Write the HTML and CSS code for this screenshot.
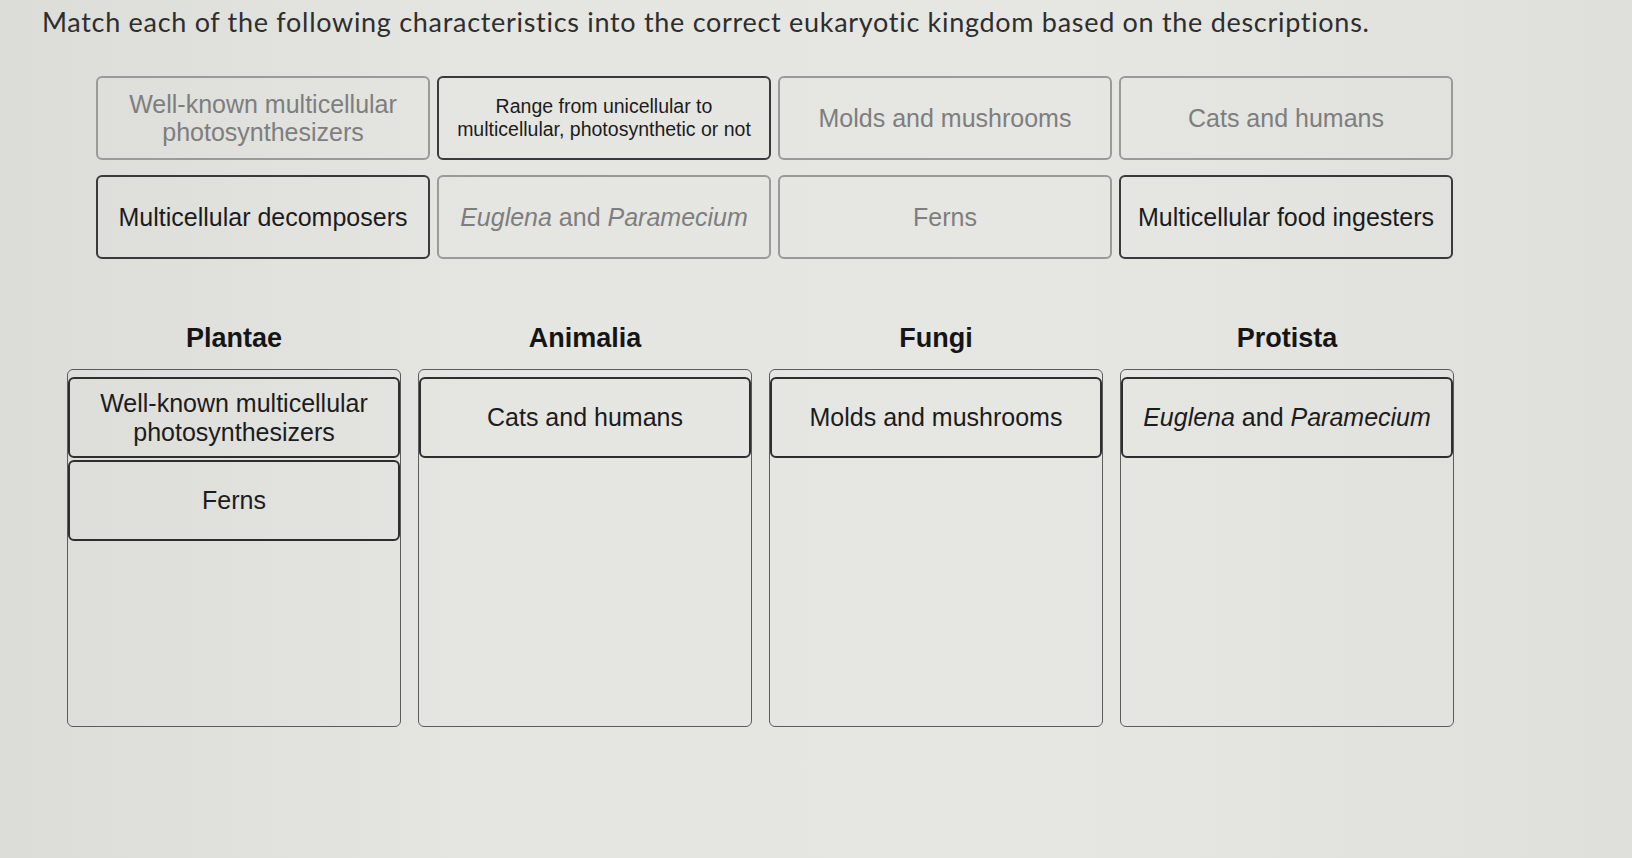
FILE: index.html
```html
<!DOCTYPE html>
<html lang="en">
<head>
  <meta charset="UTF-8">
  <meta name="viewport" content="width=device-width, initial-scale=1.0">
  <title>Eukaryotic kingdoms</title>
  <link rel="stylesheet" href="styles.css">
</head>
<body>
  <div class="page">
    <h1 class="question">Match each of the following characteristics into the correct eukaryotic kingdom based on the descriptions.</h1>

    <div class="choices">
      <div class="choice used">Well-known multicellular<br>photosynthesizers</div>
      <div class="choice small">Range from unicellular to<br>multicellular, photosynthetic or not</div>
      <div class="choice used">Molds and mushrooms</div>
      <div class="choice used">Cats and humans</div>
      <div class="choice">Multicellular decomposers</div>
      <div class="choice used"><span><i>Euglena</i> and <i>Paramecium</i></span></div>
      <div class="choice used">Ferns</div>
      <div class="choice">Multicellular food ingesters</div>
    </div>

    <div class="kingdoms">
      <div class="kingdom">
        <h2>Plantae</h2>
        <div class="zone">
          <div class="item">Well-known multicellular<br>photosynthesizers</div>
          <div class="item">Ferns</div>
        </div>
      </div>
      <div class="kingdom">
        <h2>Animalia</h2>
        <div class="zone">
          <div class="item">Cats and humans</div>
        </div>
      </div>
      <div class="kingdom">
        <h2>Fungi</h2>
        <div class="zone">
          <div class="item">Molds and mushrooms</div>
        </div>
      </div>
      <div class="kingdom">
        <h2>Protista</h2>
        <div class="zone">
          <div class="item"><span><i>Euglena</i> and <i>Paramecium</i></span></div>
        </div>
      </div>
    </div>
  </div>
</body>
</html>
```

FILE: styles.css
```css
html, body{
  margin: 0;
  height: 100%;
}
body{
  background: linear-gradient(90deg, #dcdcd8 0%, #e5e5e2 30%, #e6e6e3 65%, #dfdfdb 100%);
  font-family: "Liberation Sans", Arial, sans-serif;
  color: #1c1c1c;
  overflow: hidden;
}
.page{
  padding-top: 7px;
}

.question{
  margin: 0 0 0 42px;
  font-family: Lato, "Liberation Sans", sans-serif;
  font-size: 27px;
  letter-spacing: 0.7px;
  font-weight: 400;
  line-height: 30px;
  color: #2e2e2e;
}

.choices{
  display: grid;
  grid-template-columns: repeat(4, 334px);
  grid-auto-rows: 84px;
  column-gap: 7px;
  row-gap: 15px;
  margin: 39px 0 0 96px;
}
.choice{
  display: flex;
  align-items: center;
  justify-content: center;
  text-align: center;
  box-sizing: border-box;
  border: 2px solid #3a3a3a;
  border-radius: 6px;
  font-size: 25px;
  line-height: 28px;
  color: #1c1c1c;
}
.choice.small{
  font-size: 19.5px;
  line-height: 23px;
}
.choice.used{
  border-color: #9a9a98;
  color: #7e7e7e;
}

.kingdoms{
  display: grid;
  grid-template-columns: repeat(4, 334px);
  column-gap: 17px;
  margin: 64px 0 0 67px;
}
.kingdom h2{
  margin: 0 0 16px;
  text-align: center;
  font-size: 27px;
  line-height: 30px;
  font-weight: 700;
  color: #151515;
}
.zone{
  box-sizing: border-box;
  height: 358px;
  border: 1px solid #5c5c5c;
  border-radius: 6px;
  padding-top: 7px;
}
.item{
  display: flex;
  align-items: center;
  justify-content: center;
  text-align: center;
  box-sizing: border-box;
  height: 81px;
  margin-bottom: 2px;
  border: 2px solid #2e2e2e;
  border-radius: 6px;
  font-size: 25px;
  line-height: 29px;
  color: #1c1c1c;
}
```
